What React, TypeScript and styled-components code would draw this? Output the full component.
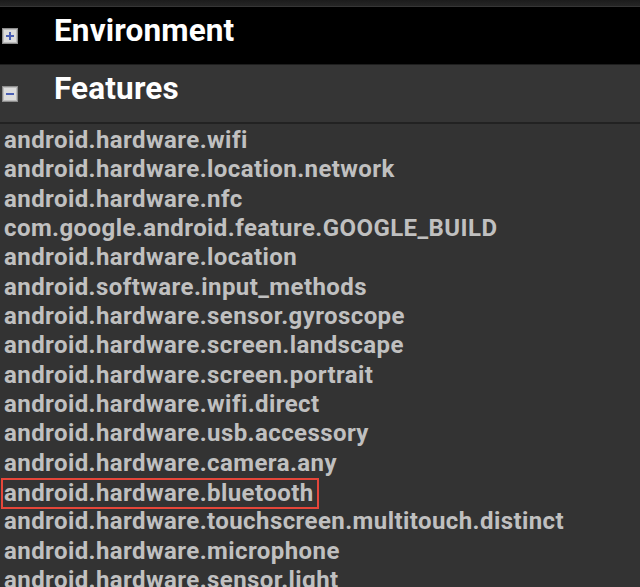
import React from "react"
import styled, { createGlobalStyle } from "styled-components"

const GlobalStyle = createGlobalStyle`
  html, body {
    margin: 0;
    padding: 0;
    background: #333333;
    overflow: hidden;
  }
  body {
    font-family: Roboto, "Noto Sans", sans-serif;
  }
`

const features = [
  "android.hardware.wifi",
  "android.hardware.location.network",
  "android.hardware.nfc",
  "com.google.android.feature.GOOGLE_BUILD",
  "android.hardware.location",
  "android.software.input_methods",
  "android.hardware.sensor.gyroscope",
  "android.hardware.screen.landscape",
  "android.hardware.screen.portrait",
  "android.hardware.wifi.direct",
  "android.hardware.usb.accessory",
  "android.hardware.camera.any",
  "android.hardware.bluetooth",
  "android.hardware.touchscreen.multitouch.distinct",
  "android.hardware.microphone",
  "android.hardware.sensor.light",
]

const Page = styled.div`
  width: 640px;
  height: 587px;
  overflow: hidden;
  background: #333333;
`

const TopStrip = styled.div`
  height: 6px;
  background: linear-gradient(#1c1c1c, #262626);
  border-bottom: 1px solid #363636;
`

const Section = styled.div<{ $open?: boolean }>`
  height: 57px;
  display: flex;
  align-items: center;
  background: ${(p) => (p.$open ? "#353535" : "#000000")};
  border-bottom: ${(p) => (p.$open ? "2px solid #222222" : "1px solid #1e1e1e")};
`

const Toggle = styled.div`
  width: 16px;
  height: 16px;
  margin: 1px 0 0 2px;
  flex: none;
  line-height: 0;
`

const Title = styled.div`
  margin-left: 36px;
  margin-bottom: 10px;
  color: #ffffff;
  font-weight: 700;
  font-size: 31.5px;
  letter-spacing: 0.15px;
`

const List = styled.div`
  padding-top: 2px;
  background: #333333;
`

const Row = styled.div<{ $selected?: boolean }>`
  height: 29.33px;
  line-height: 29.33px;
  padding-left: 4px;
  color: #c0c0c0;
  font-weight: 700;
  font-size: 24px;
  letter-spacing: 0.42px;
  white-space: nowrap;
  box-sizing: border-box;
  ${(p) =>
    p.$selected &&
    `
    width: 318px;
    height: 31px;
    margin: 0 0 -1.67px 1px;
    padding-left: 1px;
    line-height: 27px;
    border: 2px solid #e5463a;
  `}
`

const ToggleIcon = ({ plus }: { plus?: boolean }) => (
  <Toggle>
    <svg width="16" height="16" viewBox="0 0 16 16">
      <rect x="0" y="0" width="16" height="16" fill="#8c8c8c" />
      <rect x="1" y="1" width="14" height="14" fill="#bdbdbd" />
      <rect x="2" y="2" width="12" height="12" fill="#dcdcdc" />
      <rect x="4" y="7" width="8" height="2" fill="#4a5fb4" />
      {plus && <rect x="7" y="4" width="2" height="8" fill="#4a5fb4" />}
    </svg>
  </Toggle>
)

export default function App() {
  return (
    <Page>
      <GlobalStyle />
      <TopStrip />
      <Section>
        <ToggleIcon plus />
        <Title>Environment</Title>
      </Section>
      <Section $open>
        <ToggleIcon />
        <Title>Features</Title>
      </Section>
      <List>
        {features.map((f) => (
          <Row key={f} $selected={f === "android.hardware.bluetooth"}>
            {f}
          </Row>
        ))}
      </List>
    </Page>
  )
}
